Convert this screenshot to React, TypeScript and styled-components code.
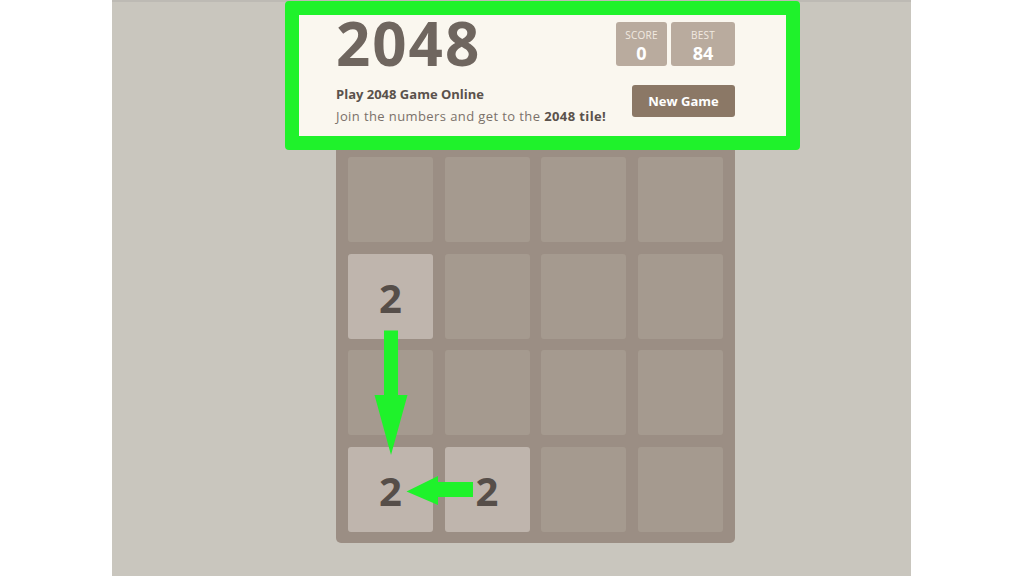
import * as React from "react";
import styled, { createGlobalStyle } from "styled-components";

const GlobalStyle = createGlobalStyle`
  html, body {
    margin: 0;
    padding: 0;
    background: #ffffff;
  }
  body {
    font-family: "Open Sans", "Liberation Sans", sans-serif;
  }
`;

const Stage = styled.div`
  width: 1024px;
  height: 576px;
  display: flex;
  overflow: hidden;
`;

const Backdrop = styled.main`
  margin-left: 112px;
  width: 799px;
  height: 576px;
  box-sizing: border-box;
  background: #c9c6be;
  border-top: 2px solid #bdbab4;
  display: flex;
  flex-direction: column;
  align-items: flex-start;
`;

const Header = styled.header`
  position: relative;
  z-index: 1;
  margin: -1px 0 0 173px;
  width: 515px;
  height: 149px;
  box-sizing: border-box;
  border: 14px solid #1ff22b;
  border-radius: 4px;
  background: #faf7ef;
  padding: 0 51px 0 37px;
  display: flex;
  flex-direction: column;
`;

const Row = styled.div`
  display: flex;
  justify-content: space-between;
  align-items: flex-start;
`;

const Title = styled.h1`
  margin: -2.5px 0 0;
  font-size: 60px;
  line-height: 60px;
  font-weight: 700;
  letter-spacing: 2px;
  color: #6f665f;
`;

const Scores = styled.div`
  display: flex;
  gap: 4px;
  margin-top: 7px;
`;

const ScoreBox = styled.div<{ $width: number }>`
  width: ${p => p.$width}px;
  height: 44px;
  box-sizing: border-box;
  padding-top: 7px;
  border-radius: 3px;
  background: #b9ab9e;
  display: flex;
  flex-direction: column;
  align-items: center;
`;

const ScoreLabel = styled.span`
  font-size: 10px;
  line-height: 12px;
  letter-spacing: 0.2px;
  color: #f2eae1;
`;

const ScoreValue = styled.span`
  margin-top: 1.5px;
  font-size: 18px;
  line-height: 20px;
  font-weight: 700;
  color: #ffffff;
`;

const Intro = styled.div`
  margin-top: 10px;
  font-size: 13px;
  line-height: 22px;
  color: #7a716a;
`;

const Tagline = styled.div`
  letter-spacing: 0.4px;
`;

const Strong = styled.strong`
  font-weight: 700;
  color: #5a524c;
`;

const NewGame = styled.button`
  margin-top: 12px;
  width: 103px;
  height: 32px;
  border: none;
  border-radius: 3px;
  background: #8b7866;
  color: #ffffff;
  font-family: inherit;
  font-size: 13px;
  font-weight: 700;
  cursor: pointer;
`;

const Board = styled.section`
  position: relative;
  margin-left: 224px;
  padding: 7px 12px 11px;
  display: grid;
  grid-template-columns: repeat(4, 85px);
  grid-auto-rows: 85px;
  gap: 11.5px;
  background: #9b8e84;
  border-radius: 0 0 5px 5px;
`;

const Cell = styled.div<{ $filled: boolean }>`
  border-radius: 3px;
  background: ${p => (p.$filled ? "#bfb5ad" : "#a59a8f")};
  display: flex;
  align-items: center;
  justify-content: center;
  padding-top: 3px;
  box-sizing: border-box;
  font-size: 40px;
  line-height: 1;
  font-weight: 700;
  color: #564e49;
`;

const Arrows = styled.svg`
  position: absolute;
  inset: 0;
  width: 100%;
  height: 100%;
  pointer-events: none;
`;

const cells = [0, 0, 0, 0, 2, 0, 0, 0, 0, 0, 0, 0, 2, 2, 0, 0];

export default function App() {
  return (
    <Stage>
      <GlobalStyle />
      <Backdrop>
        <Header>
          <Row>
            <Title>2048</Title>
            <Scores>
              <ScoreBox $width={51}>
                <ScoreLabel>SCORE</ScoreLabel>
                <ScoreValue>0</ScoreValue>
              </ScoreBox>
              <ScoreBox $width={64}>
                <ScoreLabel>BEST</ScoreLabel>
                <ScoreValue>84</ScoreValue>
              </ScoreBox>
            </Scores>
          </Row>
          <Row>
            <Intro>
              <Strong>Play 2048 Game Online</Strong>
              <Tagline>
                Join the numbers and get to the <Strong>2048 tile!</Strong>
              </Tagline>
            </Intro>
            <NewGame>New Game</NewGame>
          </Row>
        </Header>
        <Board>
          {cells.map((v, i) => (
            <Cell key={i} $filled={v > 0}>
              {v > 0 ? v : null}
            </Cell>
          ))}
          <Arrows>
            {/* down: tile 2 falls onto the bottom row */}
            <path
              d="M48 180.5 H62 V245 H71.5 L55 305 L38.5 245 H48 Z"
              fill="#1ff22b"
            />
            {/* left: bottom pair merges */}
            <path
              d="M137 332 V347 H102 V355 L70.5 341.5 L102 326 V332 Z"
              fill="#1ff22b"
            />
          </Arrows>
        </Board>
      </Backdrop>
    </Stage>
  );
}
